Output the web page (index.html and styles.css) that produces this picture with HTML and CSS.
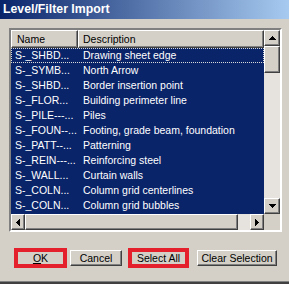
FILE: index.html
```html
<!DOCTYPE html>
<html>
<head>
<meta charset="utf-8">
<link rel="stylesheet" href="styles.css">
</head>
<body>
<div class="window">
  <div class="titlebar">Level/Filter Import</div>
  <div class="listbox">
    <div class="listmain">
      <div class="header">
        <div class="hcell hname">Name</div>
        <div class="hcell hdesc">Description</div>
      </div>
      <div class="rows">
        <div class="row focus"><span class="cname">S-_SHBD...</span><span class="cdesc">Drawing sheet edge</span></div>
        <div class="row"><span class="cname">S-_SYMB...</span><span class="cdesc">North Arrow</span></div>
        <div class="row"><span class="cname">S-_SHBD...</span><span class="cdesc">Border insertion point</span></div>
        <div class="row"><span class="cname">S-_FLOR...</span><span class="cdesc">Building perimeter line</span></div>
        <div class="row"><span class="cname">S-_PILE---...</span><span class="cdesc">Piles</span></div>
        <div class="row"><span class="cname">S-_FOUN--...</span><span class="cdesc">Footing, grade beam, foundation</span></div>
        <div class="row"><span class="cname">S-_PATT--...</span><span class="cdesc">Patterning</span></div>
        <div class="row"><span class="cname">S-_REIN---...</span><span class="cdesc">Reinforcing steel</span></div>
        <div class="row"><span class="cname">S-_WALL...</span><span class="cdesc">Curtain walls</span></div>
        <div class="row"><span class="cname">S-_COLN...</span><span class="cdesc">Column grid centerlines</span></div>
        <div class="row"><span class="cname">S-_COLN...</span><span class="cdesc">Column grid bubbles</span></div>
      </div>
    </div>
    <div class="vscroll">
      <div class="sbtn"><svg width="7" height="4" viewBox="0 0 7 4"><path d="M3 0h1v1h1v1h1v1h1v1H0V3h1V2h1V1h1z" fill="#000"/></svg></div>
      <div class="vthumb"></div>
      <div class="track"></div>
      <div class="sbtn"><svg width="7" height="4" viewBox="0 0 7 4"><path d="M0 0h7v1H6v1H5v1H4v1H3V3H2V2H1V1H0z" fill="#000"/></svg></div>
    </div>
    <div class="hscroll">
      <div class="sbtn"><svg width="4" height="7" viewBox="0 0 4 7"><path d="M3 0h1v7H3V6H2V5H1V4H0V3h1V2h1V1h1z" fill="#000"/></svg></div>
      <div class="hthumb"></div>
      <div class="track"></div>
      <div class="sbtn"><svg width="4" height="7" viewBox="0 0 4 7"><path d="M0 0h1v1h1v1h1v1h1v1H3v1H2v1H1v1H0z" fill="#000"/></svg></div>
    </div>
    <div class="corner"></div>
  </div>
  <div class="buttons">
    <div class="hl hl-ok"><div class="btn-inner"><u>O</u>K</div></div>
    <div class="btn btn-cancel">Cancel</div>
    <div class="hl hl-sel"><div class="btn-inner">Select All</div></div>
    <div class="btn btn-clear">Clear Selection</div>
  </div>
</div>
</body>
</html>
```

FILE: styles.css
```css
* { box-sizing: border-box; }
html, body { margin: 0; padding: 0; }
body {
  width: 289px;
  height: 284px;
  overflow: hidden;
  background: #d4d0c8;
  font-family: "Liberation Sans", Arial, sans-serif;
  font-size: 10.5px;
}
.window {
  width: 289px;
  height: 284px;
  display: flex;
  flex-direction: column;
  background: #d4d0c8;
  border-bottom: 2px solid #404040;
  box-shadow: inset 0 -1px #808080;
}
.titlebar {
  height: 19px;
  flex: none;
  background: linear-gradient(to right, #0a246a 0%, #a6caf0 100%);
  color: #fff;
  font-weight: bold;
  font-size: 12.3px;
  line-height: 19px;
  padding-left: 3px;
}
.listbox {
  margin: 9px 0 0 9px;
  width: 273px;
  height: 204px;
  flex: none;
  border: 2px solid;
  border-color: #808080 #fff #fff #808080;
  box-shadow: inset 1px 1px #404040, inset -1px -1px #d4d0c8;
  display: grid;
  grid-template-columns: 253px 16px;
  grid-template-rows: 184px 16px;
  background: #d4d0c8;
}
.listmain {
  display: flex;
  flex-direction: column;
  background: #0a246a;
  overflow: hidden;
}
.header {
  display: flex;
  height: 18px;
  flex: none;
  background: #d4d0c8;
}
.hcell {
  height: 18px;
  line-height: 16px;
  color: #000;
  border: 1px solid;
  border-color: #fff #404040 #404040 #fff;
  box-shadow: inset -1px -1px #808080;
  white-space: nowrap;
}
.hname { width: 67px; padding-left: 5px; }
.hdesc { flex: 1; padding-left: 4px; }
.rows { flex: 1; }
.row {
  display: flex;
  height: 15px;
  line-height: 15px;
  color: #fff;
  white-space: nowrap;
}
.row.focus {
  outline: 1px dotted #d8d8d8;
  outline-offset: -1px;
}
.cname { width: 67px; padding-left: 4px; flex: none; }
.cdesc { padding-left: 5px; }
.vscroll {
  display: flex;
  flex-direction: column;
}
.hscroll {
  display: flex;
  flex-direction: row;
}
.sbtn, .vthumb, .hthumb {
  background: #d4d0c8;
  border: 1px solid;
  border-color: #fff #404040 #404040 #fff;
  box-shadow: inset -1px -1px #808080;
  display: flex;
  align-items: center;
  justify-content: center;
  flex: none;
}
.vscroll .sbtn { height: 16px; width: 16px; }
.hscroll .sbtn { width: 14px; height: 16px; }
.vthumb { height: 27px; }
.hthumb { width: 213px; }
.track {
  flex: 1;
  background: #e6e3de;
}
.corner { background: #d4d0c8; }
.buttons {
  display: flex;
  align-items: center;
  margin-top: 16px;
  padding-left: 14px;
  height: 20px;
}
.hl {
  height: 20px;
  border: 4px solid #e4202c;
  background: #d4d0c8;
  display: flex;
  align-items: center;
  justify-content: center;
}
.hl-ok { width: 53px; }
.hl-sel { width: 61px; margin-left: 6px; }
.btn-inner {
  color: #000;
  line-height: 12px;
  white-space: nowrap;
}
.btn {
  height: 16px;
  line-height: 14px;
  text-align: center;
  border: 1px solid;
  border-color: #fff #404040 #404040 #fff;
  box-shadow: inset -1px -1px #808080;
  white-space: nowrap;
  color: #000;
}
.btn-cancel { width: 52px; margin-left: 3px; }
.btn-clear { width: 80px; margin-left: 8px; }
```
